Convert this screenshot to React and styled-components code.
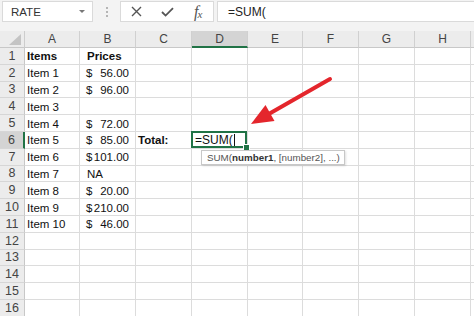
import React from "react";
import styled, { createGlobalStyle } from "styled-components";

const GlobalStyle = createGlobalStyle`
  html, body {
    margin: 0;
    padding: 0;
    background: #fff;
    overflow: hidden;
  }
  body {
    font-family: "Liberation Sans", Arial, sans-serif;
  }
`;

const Page = styled.div`
  position: relative;
  width: 474px;
  height: 316px;
  overflow: hidden;
`;

const Toolbar = styled.div`
  display: flex;
  align-items: flex-start;
  height: 31px;
  padding-top: 1px;
  box-sizing: border-box;
  background: #f3f3f3;
`;

const NameBox = styled.div`
  display: flex;
  align-items: center;
  justify-content: space-between;
  width: 91px;
  height: 21px;
  margin-left: 2px;
  padding: 0 7px 0 8px;
  box-sizing: border-box;
  background: #fff;
  border: 1px solid #dadada;
  font-size: 11.5px;
  color: #333;
`;

const Caret = styled.span`
  width: 0;
  height: 0;
  border-left: 3px solid transparent;
  border-right: 3px solid transparent;
  border-top: 3px solid #777;
`;

const Grip = styled.div`
  width: 27px;
  display: flex;
  flex-direction: column;
  align-items: center;
  gap: 2px;
  padding-top: 6px;
`;

const Dot = styled.span`
  width: 2px;
  height: 2px;
  background: #b5b5b5;
`;

const FormulaTools = styled.div`
  display: flex;
  align-items: center;
  width: 94px;
  height: 21px;
  box-sizing: border-box;
  background: #fff;
  border: 1px solid #dadada;
`;

const ToolIcon = styled.span`
  width: 31px;
  display: flex;
  justify-content: center;
  align-items: center;
  color: #555;
`;

const Fx = styled.span`
  font-family: "Liberation Serif", "Times New Roman", serif;
  font-style: italic;
  font-size: 16px;
  line-height: 1;
  color: #555;
  letter-spacing: -1px;

  sub {
    font-size: 11px;
    vertical-align: -1px;
  }
`;

const FormulaInput = styled.div`
  flex: 1;
  height: 21px;
  margin-left: 3px;
  padding-left: 10px;
  box-sizing: border-box;
  display: flex;
  align-items: center;
  background: #fff;
  border: 1px solid #dadada;
  border-right: none;
  font-size: 12px;
  color: #222;
`;

const Sheet = styled.div`
  display: grid;
  grid-template-columns: 25px 55px 56px 56px 56px 55px 56px 56px 56px 1fr;
  grid-template-rows: 17px;
  grid-auto-rows: 16.8px;
`;

const Corner = styled.div`
  display: flex;
  align-items: flex-end;
  justify-content: flex-end;
  padding: 0 3px 2px 0;
  box-sizing: border-box;
  background: #ececec;
  border-right: 1px solid #cdcdcd;
  border-bottom: 1px solid #c8c8c8;
`;

const ColHead = styled.div`
  display: flex;
  align-items: center;
  justify-content: center;
  box-sizing: border-box;
  background: ${(p) => (p.$active ? "#d4d4d4" : "#ececec")};
  border-right: 1px solid #d0d0d0;
  border-bottom: ${(p) => (p.$active ? "2px solid #217346" : "1px solid #c8c8c8")};
  padding-top: ${(p) => (p.$active ? "1px" : "0")};
  font-size: 12px;
  color: #444;
`;

const RowHead = styled.div`
  display: flex;
  align-items: center;
  justify-content: center;
  box-sizing: border-box;
  background: ${(p) => (p.$active ? "#d4d4d4" : "#ececec")};
  border-right: ${(p) => (p.$active ? "2px solid #217346" : "1px solid #c8c8c8")};
  border-bottom: 1px solid #d6d6d6;
  font-size: 12.5px;
  color: #444;
`;

const Cell = styled.div`
  position: relative;
  display: flex;
  align-items: center;
  justify-content: ${(p) => (p.$spread ? "space-between" : "flex-start")};
  box-sizing: border-box;
  padding: 1px ${(p) => p.$padRight || 2}px 0 ${(p) => p.$padLeft || 2}px;
  border-right: 1px solid #dcdcdc;
  border-bottom: 1px solid #dcdcdc;
  font-size: 11.5px;
  font-weight: ${(p) => (p.$bold ? 700 : 400)};
  color: #111;
  white-space: nowrap;
`;

const ActiveCell = styled(Cell)`
  padding-left: 3px;
  font-size: 12px;
  z-index: 2;

  &::after {
    content: "";
    position: absolute;
    top: -1px;
    left: -1px;
    right: 0;
    bottom: 0;
    border: 2px solid #217346;
  }
`;

const Caretline = styled.span`
  display: inline-block;
  width: 1px;
  height: 13px;
  margin-left: 1px;
  background: #111;
`;

const FillHandle = styled.span`
  position: absolute;
  right: -3px;
  bottom: -3px;
  width: 5px;
  height: 5px;
  background: #217346;
  border: 1px solid #fff;
  z-index: 3;
`;

const Tip = styled.div`
  position: absolute;
  top: calc(100% + 2px);
  left: 9px;
  padding: 1px 4px 1px 5px;
  background: #fff;
  border: 1px solid #c8c8c8;
  box-shadow: 1px 1px 2px rgba(0, 0, 0, 0.12);
  font-size: 9.8px;
  font-weight: 400;
  color: #555;
  white-space: nowrap;
  z-index: 4;

  b {
    color: #333;
  }
`;

const ArrowLayer = styled.svg`
  position: absolute;
  inset: 0;
  pointer-events: none;
  z-index: 5;
`;

const cols = ["A", "B", "C", "D", "E", "F", "G", "H", ""];

const data = [
  ["Items", "Prices"],
  ["Item 1", 56],
  ["Item 2", 96],
  ["Item 3", null],
  ["Item 4", 72],
  ["Item 5", 85],
  ["Item 6", 101],
  ["Item 7", "NA"],
  ["Item 8", 20],
  ["Item 9", 210],
  ["Item 10", 46],
  ["", null],
  ["", null],
  ["", null],
  ["", null],
  ["", null],
];

function PriceCell({ value, bold }) {
  if (typeof value === "number") {
    return (
      <Cell $spread $padLeft={6} $padRight={6}>
        <span>$</span>
        <span>{value.toFixed(2)}</span>
      </Cell>
    );
  }
  return (
    <Cell $padLeft={7} $bold={bold}>
      {value}
    </Cell>
  );
}

export default function App() {
  return (
    <Page>
      <GlobalStyle />
      <Toolbar>
        <NameBox>
          RATE
          <Caret />
        </NameBox>
        <Grip>
          <Dot />
          <Dot />
          <Dot />
        </Grip>
        <FormulaTools>
          <ToolIcon>
            <svg width="11" height="11" viewBox="0 0 11 11">
              <path d="M1 1 L10 10 M10 1 L1 10" stroke="#555" strokeWidth="1.4" />
            </svg>
          </ToolIcon>
          <ToolIcon>
            <svg width="13" height="10" viewBox="0 0 13 10">
              <path d="M1 5 L4.6 8.6 L12 1.2" stroke="#555" strokeWidth="1.8" fill="none" />
            </svg>
          </ToolIcon>
          <ToolIcon>
            <Fx>
              f<sub>x</sub>
            </Fx>
          </ToolIcon>
        </FormulaTools>
        <FormulaInput>=SUM(</FormulaInput>
      </Toolbar>

      <Sheet>
        <Corner>
          <svg width="12" height="11" viewBox="0 0 12 11">
            <path d="M0 11 L12 11 L12 0 Z" fill="#c4c4c4" />
          </svg>
        </Corner>
        {cols.map((c, i) => (
          <ColHead key={i} $active={c === "D"}>
            {c}
          </ColHead>
        ))}

        {data.map(([item, price], r) => {
          const n = r + 1;
          const header = n === 1;
          return (
            <React.Fragment key={n}>
              <RowHead $active={n === 6}>{n}</RowHead>
              <Cell $bold={header}>{item}</Cell>
              <PriceCell value={price} bold={header} />
              <Cell $bold={n === 6}>{n === 6 ? "Total:" : ""}</Cell>
              {n === 6 ? (
                <ActiveCell>
                  =SUM(
                  <Caretline />
                  <FillHandle />
                  <Tip>
                    SUM(<b>number1</b>, [number2], ...)
                  </Tip>
                </ActiveCell>
              ) : (
                <Cell />
              )}
              <Cell />
              <Cell />
              <Cell />
              <Cell />
              <Cell />
            </React.Fragment>
          );
        })}
      </Sheet>

      <ArrowLayer width="474" height="316" viewBox="0 0 474 316">
        <line x1="330" y1="79" x2="267" y2="115" stroke="#e4262c" strokeWidth="4" strokeLinecap="round" />
        <path d="M251 124 L274.5 121 L265.5 105 Z" fill="#e4262c" />
      </ArrowLayer>
    </Page>
  );
}
